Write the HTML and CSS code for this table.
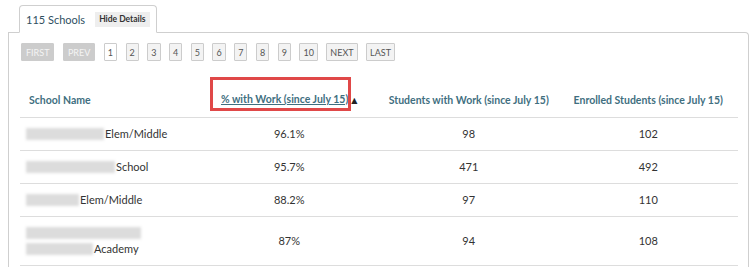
FILE: index.html
```html
<!DOCTYPE html>
<html>
<head>
<meta charset="utf-8">
<link rel="stylesheet" href="styles.css">
</head>
<body>
<div class="page">
  <div class="tabs">
    <div class="tab">
      <span class="tab-title">115 Schools</span>
      <button class="hide-btn">Hide Details</button>
    </div>
  </div>
  <div class="panel">
    <div class="pager">
      <span class="pg disabled">FIRST</span>
      <span class="pg disabled">PREV</span>
      <span class="pg current">1</span>
      <span class="pg">2</span>
      <span class="pg">3</span>
      <span class="pg">4</span>
      <span class="pg">5</span>
      <span class="pg">6</span>
      <span class="pg">7</span>
      <span class="pg">8</span>
      <span class="pg">9</span>
      <span class="pg">10</span>
      <span class="pg">NEXT</span>
      <span class="pg">LAST</span>
    </div>
    <table class="grid">
      <thead>
        <tr>
          <th class="left">School Name</th>
          <th><span class="sorted"><a href="#" class="sort-link">% with Work (since July 15)</a><span class="callout"></span></span><span class="arrow">▲</span></th>
          <th>Students with Work (since July 15)</th>
          <th>Enrolled Students (since July 15)</th>
        </tr>
      </thead>
      <tbody>
        <tr>
          <td class="left"><span class="blur" style="width:78px"></span>Elem/Middle</td>
          <td>96.1%</td>
          <td>98</td>
          <td>102</td>
        </tr>
        <tr>
          <td class="left"><span class="blur" style="width:89px"></span>School</td>
          <td>95.7%</td>
          <td>471</td>
          <td>492</td>
        </tr>
        <tr>
          <td class="left"><span class="blur" style="width:53px"></span>Elem/Middle</td>
          <td>88.2%</td>
          <td>97</td>
          <td>110</td>
        </tr>
        <tr>
          <td class="left"><span class="blur" style="width:115px"></span><br><span class="blur" style="width:67px"></span>Academy</td>
          <td>87%</td>
          <td>94</td>
          <td>108</td>
        </tr>
      </tbody>
    </table>
  </div>
</div>
</body>
</html>
```

FILE: styles.css
```css
html, body {
  margin: 0;
  padding: 0;
  background: #fff;
}

body {
  font-family: Lato, "Open Sans", Arial, sans-serif;
  color: #333;
}

.page {
  padding: 5px 5px 0 8px;
}

.tabs {
  display: flex;
  padding-left: 11px;
  position: relative;
  z-index: 2;
}

.tab {
  display: flex;
  align-items: center;
  gap: 10px;
  height: 28px;
  box-sizing: border-box;
  padding: 0 6px 0 6px;
  border: 1px solid #cfcfcf;
  border-bottom: 1px solid #fff;
  border-radius: 4px 4px 0 0;
  background: #fff;
  margin-bottom: -1px;
}

.tab-title {
  font-size: 11px;
  color: #2f4f5f;
  padding-top: 1px;
}

.hide-btn {
  font-family: Lato, Arial, sans-serif;
  font-weight: bold;
  font-size: 8.5px;
  color: #333;
  background: #eeeeee;
  border: none;
  padding: 0 4px;
  height: 15px;
  margin: 0;
}

.panel {
  border: 1px solid #cfcfcf;
  border-bottom: none;
  border-radius: 0 4px 0 0;
  height: 224px;
  padding: 10px 10px 0 11px;
  position: relative;
  z-index: 1;
}

.pager {
  display: flex;
  gap: 8.5px;
  padding-left: 1px;
}

.pg {
  display: flex;
  align-items: center;
  justify-content: center;
  height: 18px;
  box-sizing: border-box;
  min-width: 12px;
  padding: 0 3px;
  font-size: 9px;
  color: #555;
  background: #f3f3f3;
  border: 1px solid #cccccc;
  border-radius: 1px;
}

.pg.disabled {
  background: #cccccc;
  color: #f4f4f4;
  border-color: #cccccc;
  padding: 0 4px;
}

.pg.current {
  background: #fff;
}

.grid {
  width: 100%;
  table-layout: fixed;
  border-collapse: collapse;
  margin-top: 22px;
}

.grid th,
.grid td {
  text-align: center;
  padding: 8px 8px;
  line-height: 16px;
  border-bottom: 1px solid #dddddd;
}

.grid th {
  font-size: 10.5px;
  font-weight: bold;
  color: #3f6f7f;
  white-space: nowrap;
}

.grid td {
  font-size: 11px;
  color: #333;
}

.grid .left {
  text-align: left;
  padding-left: 9px;
}

.sorted {
  position: relative;
  display: inline-block;
  line-height: 16px;
}

.sort-link {
  color: #3f6f7f;
  text-decoration: underline;
}

.callout {
  position: absolute;
  left: -11px;
  right: -3px;
  top: -14px;
  bottom: -4px;
  border: 3px solid #e04848;
}

.arrow {
  font-family: "DejaVu Sans", sans-serif;
  font-size: 8px;
  color: #222;
  margin-left: 3px;
}

.blur {
  display: inline-block;
  height: 12px;
  vertical-align: -2px;
  background: #dcdcdc;
  filter: blur(1.8px);
  margin-left: -3px;
  margin-right: 1px;
}
```
